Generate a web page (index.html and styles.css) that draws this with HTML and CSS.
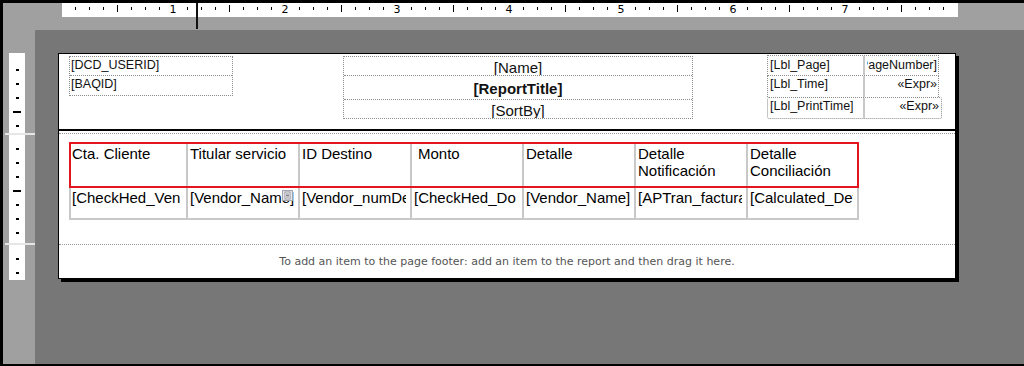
FILE: index.html
```html
<!DOCTYPE html>
<html lang="es">
<head>
    <meta charset="UTF-8">
    <title>Report Designer</title>
    <link rel="stylesheet" href="styles.css">
</head>
<body>
    <div class="designer">
        <div class="top-band">
            <div class="h-ruler">
                <i class="d"></i><i class="d"></i><i class="d"></i><i class="h"></i><i class="d"></i><i class="d"></i><i class="d"></i><b>1</b>
                <i class="d"></i><i class="d"></i><i class="d"></i><i class="h"></i><i class="d"></i><i class="d"></i><i class="d"></i><b>2</b>
                <i class="d"></i><i class="d"></i><i class="d"></i><i class="h"></i><i class="d"></i><i class="d"></i><i class="d"></i><b>3</b>
                <i class="d"></i><i class="d"></i><i class="d"></i><i class="h"></i><i class="d"></i><i class="d"></i><i class="d"></i><b>4</b>
                <i class="d"></i><i class="d"></i><i class="d"></i><i class="h"></i><i class="d"></i><i class="d"></i><i class="d"></i><b>5</b>
                <i class="d"></i><i class="d"></i><i class="d"></i><i class="h"></i><i class="d"></i><i class="d"></i><i class="d"></i><b>6</b>
                <i class="d"></i><i class="d"></i><i class="d"></i><i class="h"></i><i class="d"></i><i class="d"></i><i class="d"></i><b>7</b>
                <i class="d"></i><i class="d"></i><i class="d"></i><i class="h"></i><i class="d"></i><i class="d"></i><i class="d"></i>
            </div>
            <div class="cursor-line"></div>
        </div>

        <div class="v-ruler">
            <div class="v-sec v-sec-header">
                <i></i><i></i><i></i><i class="long"></i><i></i>
            </div>
            <div class="v-split"></div>
            <div class="v-sec v-sec-detail">
                <i></i><i></i><i></i><i class="long"></i><i></i><i></i><i></i>
            </div>
            <div class="v-split"></div>
            <div class="v-sec v-sec-footer">
                <i></i><i></i>
            </div>
        </div>

        <div class="canvas">
            <div class="page">
                <!-- page header -->
                <div class="sec-header">
                    <div class="tb tb-left">
                        <div class="tb-row tb-row-1">[DCD_USERID]</div>
                        <div class="tb-row tb-row-2">[BAQID]</div>
                    </div>
                    <div class="tb tb-center">
                        <div class="tb-row c-row-1">[Name]</div>
                        <div class="tb-row c-row-2">[ReportTitle]</div>
                        <div class="tb-row c-row-3">[SortBy]</div>
                    </div>
                    <div class="tb-right">
                        <div class="rrow rrow-1">
                            <div class="rl">[Lbl_Page]</div>
                            <div class="rv"><span>[PageNumber]</span></div>
                        </div>
                        <div class="rrow rrow-2">
                            <div class="rl">[Lbl_Time]</div>
                            <div class="rv"><span>«Expr»</span></div>
                        </div>
                        <div class="rrow rrow-3">
                            <div class="rl">[Lbl_PrintTime]</div>
                            <div class="rv"><span>«Expr»</span></div>
                        </div>
                    </div>
                </div>

                <!-- detail -->
                <div class="sec-detail">
                    <div class="dtable">
                        <div class="drow drow-head">
                            <div class="cell">Cta. Cliente</div>
                            <div class="cell">Titular servicio</div>
                            <div class="cell">ID Destino</div>
                            <div class="cell cell-indent">Monto</div>
                            <div class="cell">Detalle</div>
                            <div class="cell">Detalle<br>Notificación</div>
                            <div class="cell">Detalle<br>Conciliación</div>
                        </div>
                        <div class="drow drow-data">
                            <div class="cell"><span class="val">[CheckHed_Ven</span></div>
                            <div class="cell"><span class="val val-wide">[Vendor_Name]</span>
                                <svg class="smart-tag" width="11" height="11" viewBox="0 0 11 11">
                                    <rect x="0.5" y="0.5" width="10" height="10" fill="#e6e6ea" stroke="#a4a4ae"/>
                                    <rect x="3" y="2" width="5" height="7" fill="#fff" stroke="#80808c" stroke-width="0.8"/>
                                    <path d="M4 4h3M4 5.5h3M4 7h3" stroke="#606070" stroke-width="0.8"/>
                                </svg>
                            </div>
                            <div class="cell"><span class="val">[Vendor_numDe</span></div>
                            <div class="cell"><span class="val">[CheckHed_Do</span></div>
                            <div class="cell"><span class="val">[Vendor_Name]</span></div>
                            <div class="cell"><span class="val">[APTran_factura</span></div>
                            <div class="cell"><span class="val">[Calculated_Det</span></div>
                        </div>
                    </div>
                </div>

                <!-- page footer -->
                <div class="sec-footer">To add an item to the page footer: add an item to the report and then drag it here.</div>
            </div>
        </div>
    </div>
</body>
</html>
```

FILE: styles.css
```css
:root {
    --frame: #a0a0a0;
    --canvas: #777777;
    --dots: #8c8c8c;
    --grid: #c8c8c8;
    --select: #e3161f;
}

* {
    margin: 0;
    padding: 0;
    box-sizing: border-box;
}

body {
    width: 1024px;
    height: 366px;
    overflow: hidden;
    background-color: var(--canvas);
    font-family: "Liberation Sans", Arial, sans-serif;
    color: #000;
}

.designer {
    display: grid;
    grid-template-columns: 32px 989px;
    grid-template-rows: 27px 334px;
    height: 366px;
    border-top: 3px solid #000;
    border-left: 3px solid #000;
    border-bottom: 2px solid #000;
    background-color: var(--canvas);
}

/* top ruler */
.top-band {
    grid-column: 1 / -1;
    background-color: var(--frame);
    position: relative;
}

.h-ruler {
    margin-left: 59px;
    width: 896px;
    height: 14px;
    background-color: #fff;
    padding-left: 6px;
    display: grid;
    grid-auto-flow: column;
    grid-auto-columns: 14px;
    grid-template-rows: 14px;
    justify-items: center;
    align-items: start;
}

.h-ruler i {
    display: block;
    width: 1px;
    background-color: #000;
}

.h-ruler i.d {
    height: 3px;
    margin-top: 4px;
}

.h-ruler i.h {
    height: 7px;
    margin-top: 2px;
}

.h-ruler b {
    font-family: "DejaVu Sans", sans-serif;
    font-weight: normal;
    font-size: 11px;
    line-height: 14px;
}

.cursor-line {
    position: absolute;
    left: 193px;
    top: 0;
    width: 2px;
    height: 26px;
    background-color: #111;
}

/* left ruler */
.v-ruler {
    background-color: var(--frame);
    padding-top: 23px;
}

.v-sec {
    width: 16px;
    margin-left: 6px;
    background-color: #fff;
    display: flex;
    flex-direction: column;
    align-items: center;
    gap: 12px;
}

.v-sec i {
    display: block;
    width: 3px;
    height: 2px;
    background-color: #000;
}

.v-sec i.long {
    width: 8px;
}

.v-sec-header {
    height: 80px;
    padding-top: 16px;
}

.v-sec-detail {
    height: 108px;
    padding-top: 13px;
}

.v-sec-footer {
    height: 35px;
    padding-top: 13px;
}

.v-split {
    width: 30px;
    height: 2px;
    margin-left: 2px;
    background-color: #e6e6e6;
}

/* design surface */
.canvas {
    padding: 23px 0 0 23px;
}

.page {
    width: 898px;
    height: 226px;
    background-color: #fff;
    border: 1px solid #000;
    box-shadow: 3px 3px 0 #000;
}

.sec-header {
    height: 77px;
    border-bottom: 2px solid #000;
    display: flex;
    align-items: flex-start;
    padding: 2px 0 0 10px;
}

.tb {
    border: 1px dotted var(--dots);
    flex-shrink: 0;
}

.tb-row {
    white-space: nowrap;
    overflow: hidden;
    color: #111;
}

.tb-row + .tb-row {
    border-top: 1px dotted var(--dots);
}

.tb-left {
    width: 164px;
}

.tb-left .tb-row {
    font-size: 12.5px;
    line-height: 17px;
    padding-left: 1px;
}

.tb-row-1 {
    height: 18px;
}

.tb-row-2 {
    height: 20px;
}

.tb-center {
    width: 350px;
    margin-left: 110px;
    text-align: center;
}

.tb-center .tb-row {
    font-size: 15px;
    line-height: 17px;
}

.c-row-1 {
    height: 18px;
    padding-top: 2px;
}

.c-row-2 {
    height: 24px;
    padding-top: 4px;
    font-weight: bold;
}

.c-row-3 {
    height: 19px;
    padding-top: 2px;
}

.tb-right {
    margin-left: 74px;
    margin-top: -1px;
    display: flex;
    flex-direction: column;
    font-size: 12.5px;
    line-height: 17px;
    color: #111;
}

.rrow {
    display: flex;
    width: 172px;
    border: 1px dotted var(--dots);
}

.rrow-1 {
    height: 21px;
}

.rrow-2 {
    height: 21px;
    border-top: none;
    border-bottom: none;
}

.rrow-3 {
    width: 175px;
    height: 22px;
    border-radius: 2px;
}

.rl {
    width: 97px;
    padding-left: 2px;
    white-space: nowrap;
    overflow: hidden;
    border-right: 2px solid var(--grid);
}

.rv {
    flex: 1;
    display: flex;
    justify-content: flex-end;
    overflow: hidden;
    white-space: nowrap;
    padding-right: 1px;
    clip-path: inset(0 0 0 2px);
}

.rrow-3 .rv {
    padding-right: 2px;
}

.rv span {
    flex-shrink: 0;
}

.rrow-1 .rv,
.rrow-1 .rl {
    padding-top: 1px;
}

/* detail table */
.sec-detail {
    margin-top: 2px;
    height: 111px;
    border-top: 1px dotted #999;
    padding: 8px 0 0 10px;
}

.dtable {
    width: 790px;
}

.drow {
    display: flex;
}

.drow-head {
    height: 46px;
    border: 2px solid var(--select);
}

.drow-data {
    height: 32px;
    border: 2px solid var(--grid);
    border-top: none;
}

.cell {
    flex-shrink: 0;
    width: 112px;
    border-left: 2px solid var(--grid);
    padding: 1px 0 0 2px;
    font-size: 15px;
    line-height: 17px;
    white-space: nowrap;
    overflow: hidden;
    position: relative;
}

.cell:first-child {
    width: 115px;
    border-left: none;
    padding-left: 1px;
}

.cell:last-child {
    width: 111px;
}

.cell-indent {
    padding-left: 6px;
}

.val {
    display: block;
    overflow: hidden;
    margin-right: 4px;
}

.val-wide {
    margin-right: 2px;
}

.smart-tag {
    position: absolute;
    left: 94px;
    top: 2px;
}

/* page footer */
.sec-footer {
    height: 34px;
    border-top: 1px dotted #999;
    display: flex;
    align-items: center;
    justify-content: center;
    font-family: "DejaVu Sans", sans-serif;
    font-size: 11px;
    color: #555;
}
```
